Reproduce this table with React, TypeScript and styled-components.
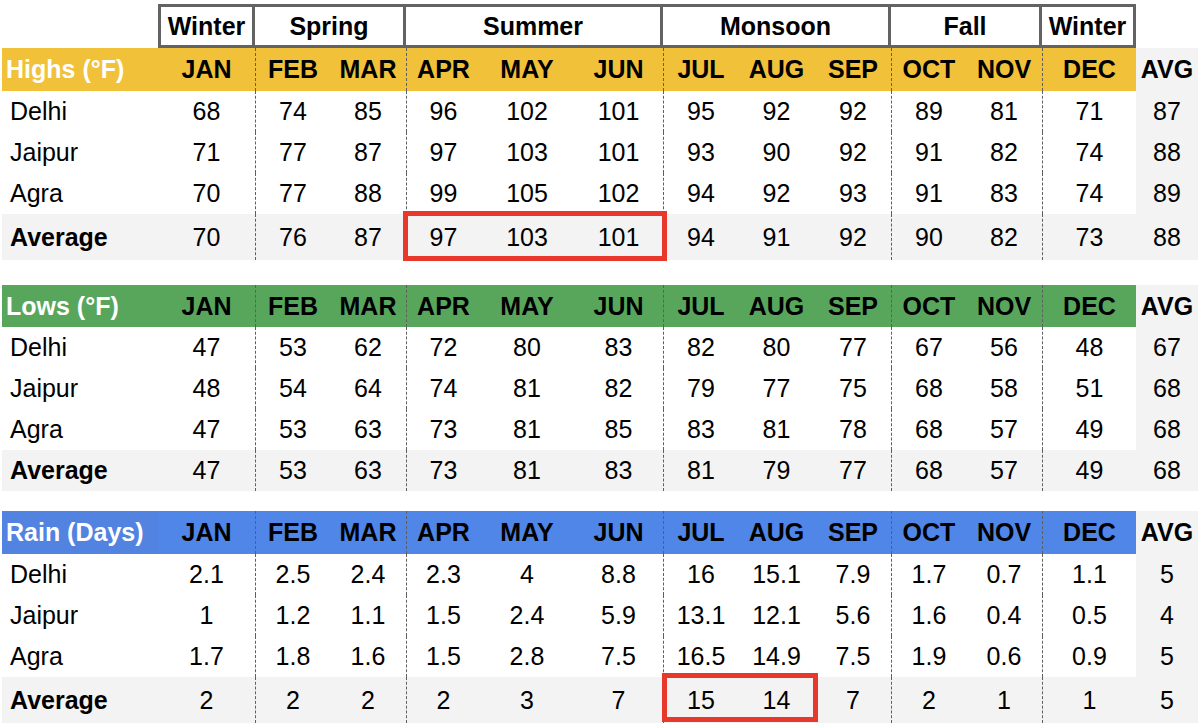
import React from "react";
import styled, { createGlobalStyle } from "styled-components";

const COLS = [156, 97, 75, 76, 74, 94, 89, 75, 77, 76, 75, 76, 94, 62];
const template = (ws: number[]) => ws.map((w) => `${w}px`).join(" ");

const MONTHS = ["JAN", "FEB", "MAR", "APR", "MAY", "JUN", "JUL", "AUG", "SEP", "OCT", "NOV", "DEC"];
// first month of each season gets the dashed divider
const DIVIDERS = [1, 3, 6, 9, 11];

const SEASONS = [
	{ name: "Winter", span: 1 },
	{ name: "Spring", span: 2 },
	{ name: "Summer", span: 3 },
	{ name: "Monsoon", span: 3 },
	{ name: "Fall", span: 2 },
	{ name: "Winter", span: 1 },
];

type Highlight = { start: number; end: number; inset: string };

type TableData = {
	title: string;
	color: string;
	labelColor: string;
	gapTop: number;
	bandHeight: number;
	avgHeight: number;
	rows: { city: string; values: (string | number)[]; avg: string | number }[];
	average: { values: (string | number)[]; avg: string | number };
	highlight?: Highlight;
};

const TABLES: TableData[] = [
	{
		title: "Highs (°F)",
		color: "#f2c13a",
		labelColor: "#f2c13a",
		gapTop: 0,
		bandHeight: 43,
		avgHeight: 46,
		rows: [
			{ city: "Delhi", values: [68, 74, 85, 96, 102, 101, 95, 92, 92, 89, 81, 71], avg: 87 },
			{ city: "Jaipur", values: [71, 77, 87, 97, 103, 101, 93, 90, 92, 91, 82, 74], avg: 88 },
			{ city: "Agra", values: [70, 77, 88, 99, 105, 102, 94, 92, 93, 91, 83, 74], avg: 89 },
		],
		average: { values: [70, 76, 87, 97, 103, 101, 94, 91, 92, 90, 82, 73], avg: 88 },
		highlight: { start: 3, end: 5, inset: "-3px -4px -1px -3px" },
	},
	{
		title: "Lows (°F)",
		color: "#58a65c",
		labelColor: "#58a65c",
		gapTop: 25,
		bandHeight: 42,
		avgHeight: 41,
		rows: [
			{ city: "Delhi", values: [47, 53, 62, 72, 80, 83, 82, 80, 77, 67, 56, 48], avg: 67 },
			{ city: "Jaipur", values: [48, 54, 64, 74, 81, 82, 79, 77, 75, 68, 58, 51], avg: 68 },
			{ city: "Agra", values: [47, 53, 63, 73, 81, 85, 83, 81, 78, 68, 57, 49], avg: 68 },
		],
		average: { values: [47, 53, 63, 73, 81, 83, 81, 79, 77, 68, 57, 49], avg: 68 },
	},
	{
		title: "Rain (Days)",
		color: "#4f86e7",
		labelColor: "#5283e0",
		gapTop: 20,
		bandHeight: 43,
		avgHeight: 46,
		rows: [
			{ city: "Delhi", values: ["2.1", "2.5", "2.4", "2.3", "4", "8.8", "16", "15.1", "7.9", "1.7", "0.7", "1.1"], avg: 5 },
			{ city: "Jaipur", values: ["1", "1.2", "1.1", "1.5", "2.4", "5.9", "13.1", "12.1", "5.6", "1.6", "0.4", "0.5"], avg: 4 },
			{ city: "Agra", values: ["1.7", "1.8", "1.6", "1.5", "2.8", "7.5", "16.5", "14.9", "7.5", "1.9", "0.6", "0.9"], avg: 5 },
		],
		average: { values: [2, 2, 2, 2, 3, 7, 15, 14, 7, 2, 1, 1], avg: 5 },
		highlight: { start: 6, end: 7, inset: "-4px -3px 1px -1px" },
	},
];

const GlobalStyle = createGlobalStyle`
	html, body {
		margin: 0;
		padding: 0;
		background: #ffffff;
	}
	body {
		font-family: "Liberation Sans", Arial, sans-serif;
		color: #000;
	}
`;

const Page = styled.div`
	width: 1200px;
	height: 723px;
	padding: 0 2px;
	box-sizing: border-box;
	overflow: hidden;
	font-size: 25px;
`;

const SeasonRow = styled.div`
	display: grid;
	grid-template-columns: ${template(COLS)};
	padding-top: 4px;
	height: 48px;
	box-sizing: border-box;
`;

const SeasonBox = styled.div<{ $span: number; $first?: boolean }>`
	grid-column: span ${(p) => p.$span};
	border: 3px solid #636363;
	margin-left: ${(p) => (p.$first ? "0" : "-3px")};
	background: #fff;
	display: flex;
	align-items: center;
	justify-content: center;
	font-weight: 700;
	box-sizing: border-box;
`;

const Table = styled.div<{ $gapTop: number }>`
	margin-top: ${(p) => p.$gapTop}px;
`;

const Row = styled.div<{ $height: number; $bg?: string }>`
	display: grid;
	grid-template-columns: ${template(COLS)};
	height: ${(p) => p.$height}px;
	background: ${(p) => p.$bg || "transparent"};
`;

const Cell = styled.div<{ $divider?: boolean; $bold?: boolean; $bg?: string }>`
	display: flex;
	align-items: center;
	justify-content: center;
	box-sizing: border-box;
	border-left: ${(p) => (p.$divider ? "1px dashed #5f5f5f" : "none")};
	font-weight: ${(p) => (p.$bold ? 700 : 400)};
	background: ${(p) => p.$bg || "transparent"};
	white-space: nowrap;
`;

const LabelCell = styled.div<{ $bold?: boolean; $white?: boolean; $pad: number; $bg?: string }>`
	display: flex;
	align-items: center;
	padding-left: ${(p) => p.$pad}px;
	font-weight: ${(p) => (p.$bold ? 700 : 400)};
	color: ${(p) => (p.$white ? "#ffffff" : "#000000")};
	background: ${(p) => p.$bg || "transparent"};
	white-space: nowrap;
`;

const AvgCell = styled.div<{ $bold?: boolean }>`
	display: flex;
	align-items: center;
	justify-content: center;
	background: #f3f3f3;
	font-weight: ${(p) => (p.$bold ? 700 : 400)};
`;

const Group = styled.div<{ $cols: number[]; $inset: string }>`
	grid-column: span ${(p) => p.$cols.length};
	display: grid;
	grid-template-columns: ${(p) => template(p.$cols)};
	position: relative;

	&::after {
		content: "";
		position: absolute;
		inset: ${(p) => p.$inset};
		border: 5px solid #e8372b;
		pointer-events: none;
	}
`;

function MonthCells({
	values,
	bold,
	highlight,
}: {
	values: (string | number)[];
	bold?: boolean;
	highlight?: Highlight;
}) {
	const out: React.ReactNode[] = [];
	for (let i = 0; i < values.length; i++) {
		if (highlight && i === highlight.start) {
			const idx: number[] = [];
			for (let j = highlight.start; j <= highlight.end; j++) idx.push(j);
			out.push(
				<Group key={`g${i}`} $cols={idx.map((j) => COLS[j + 1])} $inset={highlight.inset}>
					{idx.map((j) => (
						<Cell key={j} $divider={DIVIDERS.includes(j)} $bold={bold}>
							{values[j]}
						</Cell>
					))}
				</Group>
			);
			i = highlight.end;
			continue;
		}
		out.push(
			<Cell key={i} $divider={DIVIDERS.includes(i)} $bold={bold}>
				{values[i]}
			</Cell>
		);
	}
	return <>{out}</>;
}

function WeatherTable({ data }: { data: TableData }) {
	return (
		<Table $gapTop={data.gapTop}>
			<Row $height={data.bandHeight}>
				<LabelCell $bold $white $pad={4} $bg={data.labelColor}>
					{data.title}
				</LabelCell>
				{MONTHS.map((m, i) => (
					<Cell key={m} $divider={DIVIDERS.includes(i)} $bold $bg={data.color}>
						{m}
					</Cell>
				))}
				<AvgCell $bold>AVG</AvgCell>
			</Row>
			{data.rows.map((r) => (
				<Row key={r.city} $height={41}>
					<LabelCell $pad={8}>{r.city}</LabelCell>
					<MonthCells values={r.values} />
					<AvgCell>{r.avg}</AvgCell>
				</Row>
			))}
			<Row $height={data.avgHeight} $bg="#f3f3f3">
				<LabelCell $bold $pad={8}>
					Average
				</LabelCell>
				<MonthCells values={data.average.values} highlight={data.highlight} />
				<AvgCell>{data.average.avg}</AvgCell>
			</Row>
		</Table>
	);
}

export default function App() {
	return (
		<>
			<GlobalStyle />
			<Page>
				<SeasonRow>
					<div />
					{SEASONS.map((s, i) => (
						<SeasonBox key={i} $span={s.span} $first={i === 0}>
							{s.name}
						</SeasonBox>
					))}
				</SeasonRow>
				{TABLES.map((t) => (
					<WeatherTable key={t.title} data={t} />
				))}
			</Page>
		</>
	);
}
